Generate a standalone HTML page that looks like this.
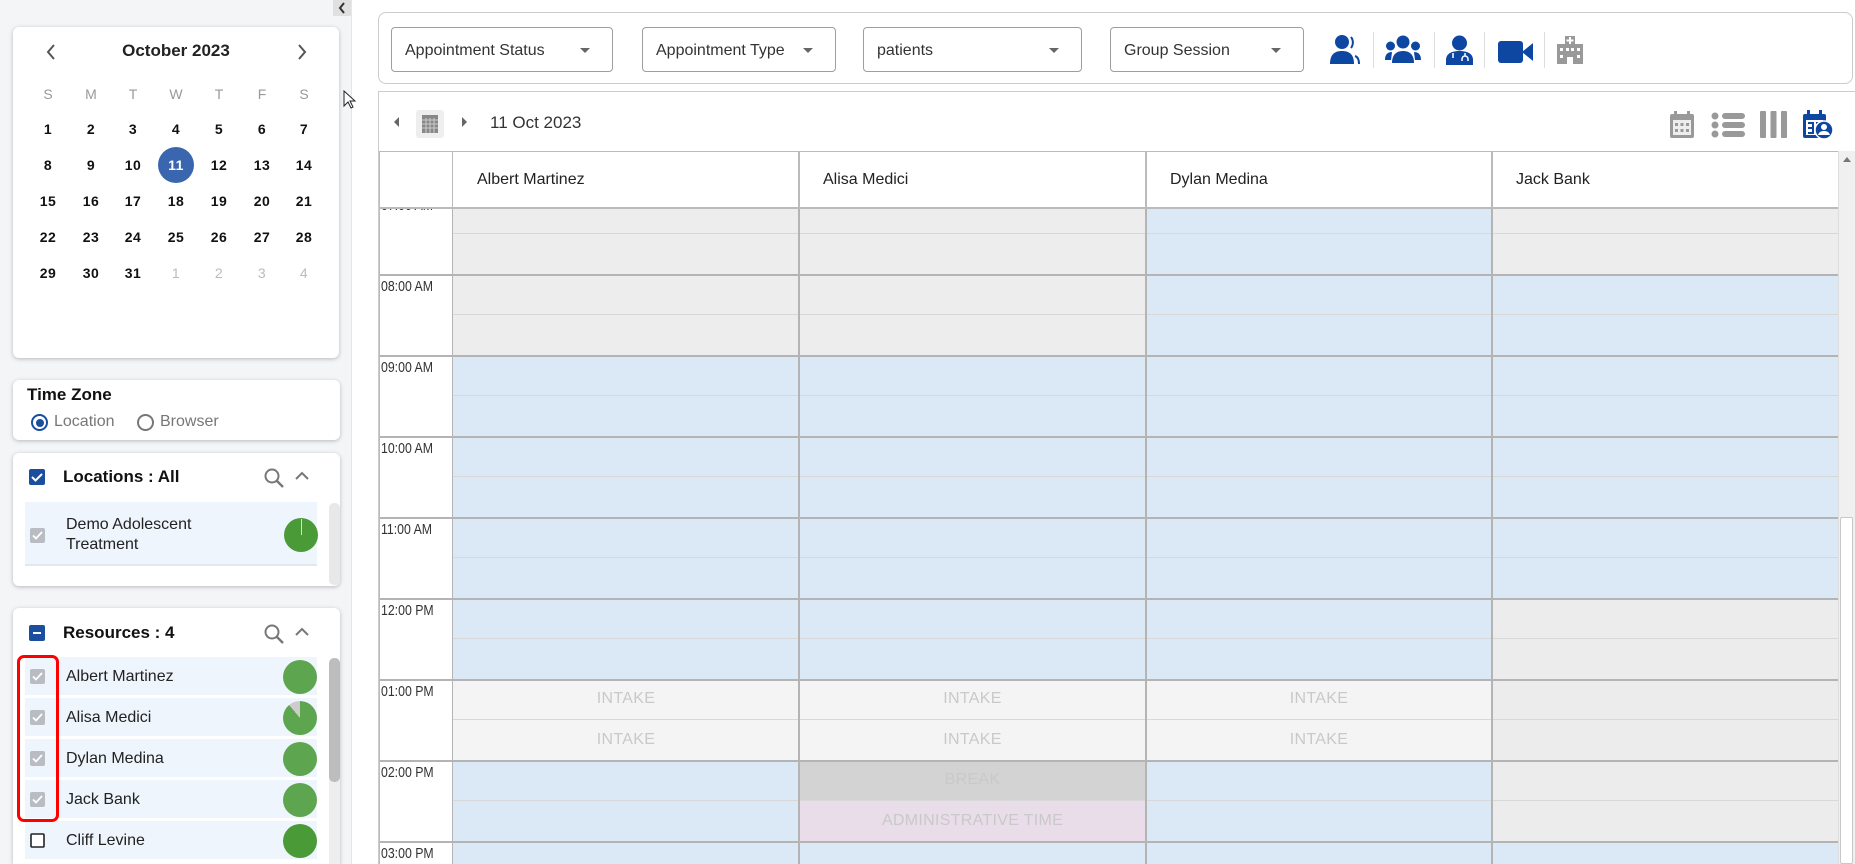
<!DOCTYPE html>
<html><head><meta charset="utf-8"><style>
*{box-sizing:border-box;margin:0;padding:0}
html,body{width:1855px;height:864px;overflow:hidden}
body{background:#fff;font-family:"Liberation Sans",sans-serif;position:relative;color:#222}
.a{position:absolute}
.card{position:absolute;background:#fff;border-radius:6px;box-shadow:0 1px 4px rgba(0,0,0,.25)}
.d{position:absolute;width:40px;text-align:center;font-size:14px;font-weight:bold;color:#111;letter-spacing:.5px}
.wd{position:absolute;width:40px;text-align:center;font-size:14px;color:#999}
.dd{position:absolute;top:27px;height:45px;border:1px solid #9e9e9e;border-radius:4px;font-size:16px;color:#333;padding:14px 0 0 13px}
.dd i{position:absolute;right:22px;top:20px;border-left:5px solid transparent;border-right:5px solid transparent;border-top:5px solid #666}
.sep{position:absolute;top:32px;width:1px;height:36px;background:#ddd}
.row{position:absolute;left:25px;width:292px;height:40px;background:#eef5fd;border-bottom:2px solid #fff}
.row span{position:absolute;left:41px;top:11px;font-size:16px;color:#222}
.pie{position:absolute;right:0;top:3px;width:34px;height:34px;border-radius:50%;background:#5ea54f}
.cb{position:absolute;left:5px;top:12px}
.hn{position:absolute;top:171px;font-size:16px;color:#222}
.tl{position:absolute;left:381px;font-size:15px;color:#333;white-space:nowrap;transform:scaleX(.82);transform-origin:0 0}
.ev{position:absolute;height:40.5px;text-align:center;line-height:40px;font-size:16px;color:#c9c9c9;letter-spacing:.3px}
</style></head><body>
<!-- sidebar -->
<div class="a" style="left:0;top:0;width:352px;height:864px;background:#f4f5f7;border-right:1px solid #e6e6e6"></div>
<div class="a" style="left:333px;top:0;width:18px;height:16px;background:#e0e0e0"></div>
<svg class="a" style="left:337px;top:2px" width="10" height="12"><path d="M7 1L3 6l4 5" stroke="#333" stroke-width="2" fill="none"/></svg>
<svg class="a" style="left:343px;top:90px" width="14" height="20"><path d="M1 1v15l4-4 3 6 2-1-3-6h5z" fill="#fff" stroke="#222" stroke-width="1"/></svg>

<div class="card" style="left:13px;top:27px;width:326px;height:331px">
<svg class="a" style="left:32px;top:16px" width="12" height="18"><path d="M9 2L3 9l6 7" stroke="#555" stroke-width="2" fill="none"/></svg>
<div class="a" style="left:0;width:326px;top:14px;text-align:center;font-size:17px;font-weight:bold;color:#222">October 2023</div>
<svg class="a" style="left:283px;top:16px" width="12" height="18"><path d="M3 2l6 7-6 7" stroke="#555" stroke-width="2" fill="none"/></svg>
</div>
<div class="a" style="left:0;top:0">
<div class="wd" style="left:28px;top:86px">S</div><div class="wd" style="left:71px;top:86px">M</div><div class="wd" style="left:113px;top:86px">T</div><div class="wd" style="left:156px;top:86px">W</div><div class="wd" style="left:199px;top:86px">T</div><div class="wd" style="left:242px;top:86px">F</div><div class="wd" style="left:284px;top:86px">S</div>
<div class="a" style="left:158px;top:147px;width:36px;height:36px;border-radius:50%;background:#3a66b0"></div>
<div class="d" style="left:28px;top:121px">1</div><div class="d" style="left:71px;top:121px">2</div><div class="d" style="left:113px;top:121px">3</div><div class="d" style="left:156px;top:121px">4</div><div class="d" style="left:199px;top:121px">5</div><div class="d" style="left:242px;top:121px">6</div><div class="d" style="left:284px;top:121px">7</div>
<div class="d" style="left:28px;top:157px">8</div><div class="d" style="left:71px;top:157px">9</div><div class="d" style="left:113px;top:157px">10</div><div class="d" style="left:156px;top:157px;color:#fff">11</div><div class="d" style="left:199px;top:157px">12</div><div class="d" style="left:242px;top:157px">13</div><div class="d" style="left:284px;top:157px">14</div>
<div class="d" style="left:28px;top:193px">15</div><div class="d" style="left:71px;top:193px">16</div><div class="d" style="left:113px;top:193px">17</div><div class="d" style="left:156px;top:193px">18</div><div class="d" style="left:199px;top:193px">19</div><div class="d" style="left:242px;top:193px">20</div><div class="d" style="left:284px;top:193px">21</div>
<div class="d" style="left:28px;top:229px">22</div><div class="d" style="left:71px;top:229px">23</div><div class="d" style="left:113px;top:229px">24</div><div class="d" style="left:156px;top:229px">25</div><div class="d" style="left:199px;top:229px">26</div><div class="d" style="left:242px;top:229px">27</div><div class="d" style="left:284px;top:229px">28</div>
<div class="d" style="left:28px;top:265px">29</div><div class="d" style="left:71px;top:265px">30</div><div class="d" style="left:113px;top:265px">31</div><div class="d" style="left:156px;top:265px;color:#bbb;font-weight:normal">1</div><div class="d" style="left:199px;top:265px;color:#bbb;font-weight:normal">2</div><div class="d" style="left:242px;top:265px;color:#bbb;font-weight:normal">3</div><div class="d" style="left:284px;top:265px;color:#bbb;font-weight:normal">4</div>
</div>

<div class="card" style="left:13px;top:380px;width:327px;height:60px">
<div class="a" style="left:14px;top:5px;font-size:17px;font-weight:bold;color:#111">Time Zone</div>
<div class="a" style="left:18px;top:34px;width:17px;height:17px;border:2px solid #1a4fa0;border-radius:50%"><div class="a" style="left:2.5px;top:2.5px;width:8px;height:8px;border-radius:50%;background:#1a4fa0"></div></div>
<div class="a" style="left:41px;top:33px;font-size:16px;color:#777">Location</div>
<div class="a" style="left:124px;top:34px;width:17px;height:17px;border:2px solid #777;border-radius:50%"></div>
<div class="a" style="left:147px;top:33px;font-size:16px;color:#777">Browser</div>
</div>

<div class="card" style="left:13px;top:453px;width:327px;height:133px">
<div class="a" style="left:16px;top:16px;width:16px;height:16px;background:#1a4fa0;border-radius:2px"><svg width="16" height="16"><path d="M3 8l3.5 3.5L13 5" stroke="#fff" stroke-width="2" fill="none"/></svg></div>
<div class="a" style="left:50px;top:14px;font-size:17px;font-weight:bold;color:#111">Locations : All</div>
<svg class="a" style="left:250px;top:14px" width="22" height="22"><circle cx="9" cy="9" r="6.5" stroke="#777" stroke-width="2" fill="none"/><path d="M14 14l6 6" stroke="#777" stroke-width="2.4"/></svg>
<svg class="a" style="left:281px;top:17px" width="16" height="12"><path d="M2 9l6-6 6 6" stroke="#777" stroke-width="2" fill="none"/></svg>
<div class="a" style="left:12px;top:49px;width:292px;height:64px;background:#eef5fd;border-bottom:2px solid #e2e8ef"></div>
<svg class="a" style="left:17px;top:75px" width="15" height="15"><rect width="15" height="15" rx="2" fill="#b9bdc3"/><path d="M3 7.5l3 3L12 4" stroke="#fff" stroke-width="1.8" fill="none"/></svg>
<div class="a" style="left:53px;top:62px;font-size:16px;color:#222;line-height:20px">Demo Adolescent<br>Treatment</div>
<div class="a" style="left:271px;top:65px;width:34px;height:34px;border-radius:50%;background:#4a9a37"><div class="a" style="left:16.5px;top:1px;width:1px;height:16px;background:#ddd"></div></div>
<div class="a" style="left:316px;top:50px;width:11px;height:82px;background:#e8e8e8;border-radius:5px"></div>
</div>

<div class="card" style="left:13px;top:608px;width:327px;height:256px;border-radius:6px 6px 0 0">
<div class="a" style="left:16px;top:17px;width:16px;height:16px;background:#1a4fa0;border-radius:2px"><div class="a" style="left:4px;top:7px;width:8px;height:2px;background:#fff"></div></div>
<div class="a" style="left:50px;top:15px;font-size:17px;font-weight:bold;color:#111">Resources : 4</div>
<svg class="a" style="left:250px;top:15px" width="22" height="22"><circle cx="9" cy="9" r="6.5" stroke="#777" stroke-width="2" fill="none"/><path d="M14 14l6 6" stroke="#777" stroke-width="2.4"/></svg>
<svg class="a" style="left:281px;top:18px" width="16" height="12"><path d="M2 9l6-6 6 6" stroke="#777" stroke-width="2" fill="none"/></svg>
<div class="a" style="left:316px;top:50px;width:11px;height:206px;background:#eee;border-radius:5px 5px 0 0"></div>
<div class="a" style="left:316px;top:50px;width:11px;height:124px;background:#bdbdbd;border-radius:5px"></div>
</div>
<div class="a" style="left:0;top:0;width:352px;height:864px;overflow:hidden">
<div class="row" style="top:657px"><svg class="cb" width="15" height="15"><rect width="15" height="15" rx="2" fill="#b9bdc3"/><path d="M3 7.5l3 3L12 4" stroke="#fff" stroke-width="1.8" fill="none"/></svg><span>Albert Martinez</span><div class="pie" style="top:3px"></div></div>
<div class="row" style="top:698px"><svg class="cb" width="15" height="15"><rect width="15" height="15" rx="2" fill="#b9bdc3"/><path d="M3 7.5l3 3L12 4" stroke="#fff" stroke-width="1.8" fill="none"/></svg><span>Alisa Medici</span><div class="pie" style="background:conic-gradient(#ccc 0 11%,#5ea54f 11% 100%);transform:rotate(-40deg)"></div></div>
<div class="row" style="top:739px"><svg class="cb" width="15" height="15"><rect width="15" height="15" rx="2" fill="#b9bdc3"/><path d="M3 7.5l3 3L12 4" stroke="#fff" stroke-width="1.8" fill="none"/></svg><span>Dylan Medina</span><div class="pie"></div></div>
<div class="row" style="top:780px"><svg class="cb" width="15" height="15"><rect width="15" height="15" rx="2" fill="#b9bdc3"/><path d="M3 7.5l3 3L12 4" stroke="#fff" stroke-width="1.8" fill="none"/></svg><span>Jack Bank</span><div class="pie"></div></div>
<div class="row" style="top:821px"><svg class="cb" width="15" height="15"><rect x="1" y="1" width="13" height="13" rx="1" fill="#fff" stroke="#222" stroke-width="1.6"/></svg><span>Cliff Levine</span><div class="pie" style="background:#4a9a37"></div></div>
<div class="a" style="left:17px;top:655px;width:42px;height:167px;border:3.5px solid #f00;border-radius:7px"></div>
</div>

<!-- filter bar -->
<div class="a" style="left:378px;top:12px;width:1475px;height:72px;border:1px solid #ccc;border-radius:8px"></div>
<div class="dd" style="left:391px;width:222px">Appointment Status<i></i></div>
<div class="dd" style="left:642px;width:194px">Appointment Type<i></i></div>
<div class="dd" style="left:863px;width:219px">patients<i></i></div>
<div class="dd" style="left:1110px;width:194px">Group Session<i></i></div>
<svg class="a" style="left:1330px;top:34px" width="32" height="32" fill="#0d47a1"><circle cx="12" cy="8" r="7"/><path d="M0 30c0-9 4-13 12-13s12 4 12 13z"/><path d="M21 3a9 9 0 0 1 0 11M25 22c3 1 4 4 4 8" stroke="#0d47a1" stroke-width="2" fill="none"/></svg>
<div class="sep" style="left:1373px"></div>
<svg class="a" style="left:1385px;top:35px" width="36" height="30" fill="#0d47a1"><circle cx="18" cy="7" r="6.5"/><circle cx="5.5" cy="11" r="4.5"/><circle cx="30.5" cy="11" r="4.5"/><path d="M7 28c0-8 4-12 11-12s11 4 11 12z"/><path d="M0 25c0-6 3-8 7-8l-1 8zM36 25c0-6-3-8-7-8l1 8z"/></svg>
<div class="sep" style="left:1434px"></div>
<svg class="a" style="left:1446px;top:35px" width="27" height="30" fill="#0d47a1"><circle cx="13.5" cy="8" r="7.5"/><path d="M0 30v-5c0-6 5-9 13.5-9S27 19 27 25v5z"/><path d="M7 18v5M19 18v3a3 3 0 0 0-3 3v2M19 21a3 3 0 0 1 3 3v2" stroke="#fff" stroke-width="1.5" fill="none"/></svg>
<div class="sep" style="left:1484px"></div>
<svg class="a" style="left:1498px;top:41px" width="35" height="22" fill="#0d47a1"><rect width="25" height="22" rx="3"/><path d="M24 11l11-9v18z"/></svg>
<div class="sep" style="left:1544px"></div>
<svg class="a" style="left:1557px;top:36px" width="26" height="28" fill="#999"><path d="M8 0h10v8h8v20H16v-7h-6v7H0V8h8z"/><path d="M13 1v7M9.5 4.5h7" stroke="#fff" stroke-width="2"/><rect x="3" y="12" width="3" height="3" fill="#fff"/><rect x="20" y="12" width="3" height="3" fill="#fff"/><rect x="3" y="19" width="3" height="3" fill="#fff"/><rect x="20" y="19" width="3" height="3" fill="#fff"/><rect x="9" y="12" width="3" height="3" fill="#fff"/><rect x="14" y="12" width="3" height="3" fill="#fff"/></svg>

<!-- scheduler panel -->
<div class="a" style="left:378px;top:91px;width:1477px;height:773px;border-top:1px solid #ccc;border-left:1px solid #ccc"></div>
<svg class="a" style="left:393px;top:116px" width="8" height="12"><path d="M6 1v10L1 6z" fill="#666"/></svg>
<div class="a" style="left:416px;top:110px;width:28px;height:28px;background:#eee;border-radius:3px"></div>
<svg class="a" style="left:422px;top:115px" width="16" height="18"><rect width="16" height="18" fill="#888"/><path d="M0 5h16M0 9h16M0 13h16M4 3v15M8 3v15M12 3v15" stroke="#ccc" stroke-width="1"/></svg>
<svg class="a" style="left:460px;top:116px" width="8" height="12"><path d="M2 1v10l5-5z" fill="#666"/></svg>
<div class="a" style="left:490px;top:113px;font-size:17px;color:#333">11 Oct 2023</div>
<svg class="a" style="left:1670px;top:111px" width="24" height="27" fill="#999"><rect y="3" width="24" height="24" rx="2"/><rect x="4" width="3" height="5"/><rect x="17" width="3" height="5"/><rect x="3" y="9" width="18" height="15" fill="#eee"/><g fill="#999"><rect x="5" y="12" width="3" height="3"/><rect x="10.5" y="12" width="3" height="3"/><rect x="16" y="12" width="3" height="3"/><rect x="5" y="18" width="3" height="3"/><rect x="10.5" y="18" width="3" height="3"/><rect x="16" y="18" width="3" height="3"/></g></svg>
<svg class="a" style="left:1711px;top:112px" width="34" height="26" fill="#999"><circle cx="4" cy="4" r="3.5"/><circle cx="4" cy="13" r="3.5"/><circle cx="4" cy="22" r="3.5"/><rect x="11" y="1" width="23" height="6" rx="3"/><rect x="11" y="10" width="23" height="6" rx="3"/><rect x="11" y="19" width="23" height="6" rx="3"/></svg>
<svg class="a" style="left:1760px;top:111px" width="27" height="27" fill="#999"><rect width="6" height="27" rx="1"/><rect x="10.5" width="6" height="27" rx="1"/><rect x="21" width="6" height="27" rx="1"/></svg>
<svg class="a" style="left:1803px;top:110px" width="30" height="30"><rect y="4" width="23" height="24" rx="2" fill="#0d47a1"/><rect x="4" width="3" height="6" fill="#0d47a1"/><rect x="16" width="3" height="6" fill="#0d47a1"/><rect x="3" y="10" width="17" height="15" fill="#fff"/><path d="M5 13h5v10H5M5 18h4M13 13h4" stroke="#0d47a1" stroke-width="2" fill="none"/><circle cx="21" cy="20" r="9" fill="#0d47a1" stroke="#fff" stroke-width="1.5"/><circle cx="21" cy="17" r="3" fill="#fff"/><path d="M15 25c1-3 3-4 6-4s5 1 6 4z" fill="#fff"/></svg>

<!-- header -->
<div class="a" style="left:379px;top:151px;width:1460px;height:1px;background:#bbb"></div>
<div class="a" style="left:379px;top:207px;width:1460px;height:2px;background:#bbb"></div>
<div class="hn" style="left:477px">Albert Martinez</div>
<div class="hn" style="left:823px">Alisa Medici</div>
<div class="hn" style="left:1170px">Dylan Medina</div>
<div class="hn" style="left:1516px">Jack Bank</div>

<!-- grid -->
<div class="a" style="left:0;top:209px;width:1838px;height:655px;overflow:hidden">
<div class="a" style="left:0;top:-16px">
<div class="a" style="left:453px;top:0;width:346px;height:162px;background:#ededed"></div>
<div class="a" style="left:453px;top:162px;width:346px;height:324px;background:#dbe9f6"></div>
<div class="a" style="left:453px;top:486px;width:346px;height:81px;background:#f4f4f4"></div>
<div class="a" style="left:453px;top:567px;width:346px;height:200px;background:#dbe9f6"></div>
<div class="a" style="left:799px;top:0;width:347px;height:162px;background:#ededed"></div>
<div class="a" style="left:799px;top:162px;width:347px;height:324px;background:#dbe9f6"></div>
<div class="a" style="left:799px;top:486px;width:347px;height:81px;background:#f4f4f4"></div>
<div class="a" style="left:799px;top:567px;width:347px;height:40.5px;background:#d3d3d3"></div>
<div class="a" style="left:799px;top:607.5px;width:347px;height:40.5px;background:#e8dde9"></div>
<div class="a" style="left:799px;top:648px;width:347px;height:120px;background:#dbe9f6"></div>
<div class="a" style="left:1146px;top:0;width:346px;height:486px;background:#dbe9f6"></div>
<div class="a" style="left:1146px;top:486px;width:346px;height:81px;background:#f4f4f4"></div>
<div class="a" style="left:1146px;top:567px;width:346px;height:200px;background:#dbe9f6"></div>
<div class="a" style="left:1492px;top:0;width:346px;height:81px;background:#ededed"></div>
<div class="a" style="left:1492px;top:81px;width:346px;height:324px;background:#dbe9f6"></div>
<div class="a" style="left:1492px;top:405px;width:346px;height:243px;background:#ececec"></div>
<div class="a" style="left:1492px;top:648px;width:346px;height:120px;background:#dbe9f6"></div>
<div class="a" style="left:453px;top:40px;width:1385px;height:1px;background:#d8d8d8"></div>
<div class="a" style="left:453px;top:121px;width:1385px;height:1px;background:#d8d8d8"></div>
<div class="a" style="left:453px;top:202px;width:1385px;height:1px;background:#d8d8d8"></div>
<div class="a" style="left:453px;top:283px;width:1385px;height:1px;background:#d8d8d8"></div>
<div class="a" style="left:453px;top:364px;width:1385px;height:1px;background:#d8d8d8"></div>
<div class="a" style="left:453px;top:445px;width:1385px;height:1px;background:#d8d8d8"></div>
<div class="a" style="left:453px;top:526px;width:1385px;height:1px;background:#d8d8d8"></div>
<div class="a" style="left:453px;top:607px;width:1385px;height:1px;background:#d8d8d8"></div>
<div class="a" style="left:379px;top:81px;width:1459px;height:2px;background:#b4b4b4"></div>
<div class="a" style="left:379px;top:162px;width:1459px;height:2px;background:#b4b4b4"></div>
<div class="a" style="left:379px;top:243px;width:1459px;height:2px;background:#b4b4b4"></div>
<div class="a" style="left:379px;top:324px;width:1459px;height:2px;background:#b4b4b4"></div>
<div class="a" style="left:379px;top:405px;width:1459px;height:2px;background:#b4b4b4"></div>
<div class="a" style="left:379px;top:486px;width:1459px;height:2px;background:#b4b4b4"></div>
<div class="a" style="left:379px;top:567px;width:1459px;height:2px;background:#b4b4b4"></div>
<div class="a" style="left:379px;top:648px;width:1459px;height:2px;background:#b4b4b4"></div>
<div class="a" style="left:452px;top:0;width:1px;height:800px;background:#b4b4b4"></div>
<div class="a" style="left:798px;top:0;width:2px;height:800px;background:#b4b4b4"></div>
<div class="a" style="left:1145px;top:0;width:2px;height:800px;background:#b4b4b4"></div>
<div class="a" style="left:1491px;top:0;width:2px;height:800px;background:#b4b4b4"></div>
<div class="tl" style="top:4px">07:00 AM</div>
<div class="tl" style="top:85px">08:00 AM</div>
<div class="tl" style="top:166px">09:00 AM</div>
<div class="tl" style="top:247px">10:00 AM</div>
<div class="tl" style="top:328px">11:00 AM</div>
<div class="tl" style="top:409px">12:00 PM</div>
<div class="tl" style="top:490px">01:00 PM</div>
<div class="tl" style="top:571px">02:00 PM</div>
<div class="tl" style="top:652px">03:00 PM</div>
<div class="ev" style="left:453px;top:486px;width:346px">INTAKE</div>
<div class="ev" style="left:453px;top:526.5px;width:346px">INTAKE</div>
<div class="ev" style="left:799px;top:486px;width:347px">INTAKE</div>
<div class="ev" style="left:799px;top:526.5px;width:347px">INTAKE</div>
<div class="ev" style="left:1146px;top:486px;width:346px">INTAKE</div>
<div class="ev" style="left:1146px;top:526.5px;width:346px">INTAKE</div>
<div class="ev" style="left:799px;top:567px;width:347px">BREAK</div>
<div class="ev" style="left:799px;top:607.5px;width:347px">ADMINISTRATIVE TIME</div>
</div></div>
<div class="a" style="left:379px;top:151px;width:1px;height:713px;background:#bbb"></div>
<div class="a" style="left:452px;top:151px;width:1px;height:58px;background:#bbb"></div>
<div class="a" style="left:798px;top:151px;width:2px;height:58px;background:#bbb"></div>
<div class="a" style="left:1145px;top:151px;width:2px;height:58px;background:#bbb"></div>
<div class="a" style="left:1491px;top:151px;width:2px;height:58px;background:#bbb"></div>
<div class="a" style="left:1838px;top:151px;width:17px;height:713px;background:#f0f0f0;border-left:1px solid #ddd"></div>
<svg class="a" style="left:1842px;top:155px" width="10" height="8"><path d="M1 7l4-5 4 5z" fill="#777"/></svg>
<div class="a" style="left:1840px;top:517px;width:13px;height:347px;background:#fff;border:1px solid #c8c8c8;border-radius:2px"></div>
</body></html>
